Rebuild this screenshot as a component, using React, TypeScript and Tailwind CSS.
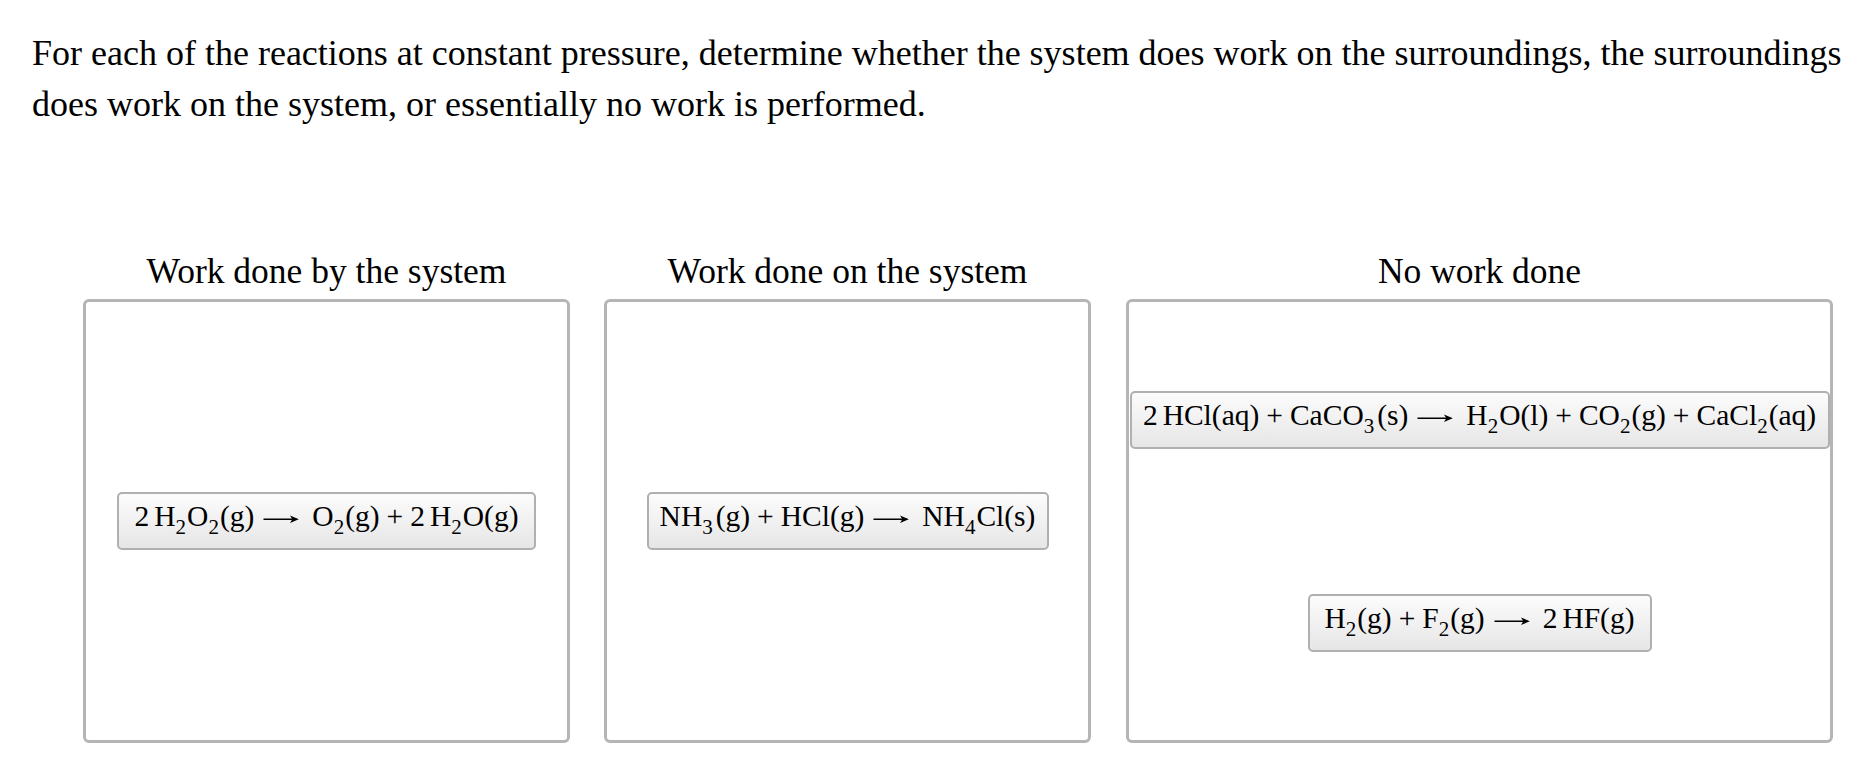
import React from "react";

function Sub({ children }: { children: React.ReactNode }) {
  return (
    <span className="relative top-[8px] mr-[1px] text-[21px]">{children}</span>
  );
}

function Thin() {
  return <span className="inline-block w-[5px]" />;
}

function Plus() {
  return <span className="mx-[7px]">+</span>;
}

function Arrow() {
  return (
    <svg
      className="ml-[9px] mr-[13px] inline-block align-baseline"
      width="36"
      height="12"
      viewBox="0 0 36 12"
    >
      <line x1="0.5" y1="5.25" x2="33.5" y2="5.25" stroke="#000" strokeWidth="1.5" />
      <path d="M35.8 5.25 L27 1.4 L29.3 5.25 L27 9.1 Z" fill="#000" />
    </svg>
  );
}

function Chip({
  width,
  children,
}: {
  width: string;
  children: React.ReactNode;
}) {
  return (
    <div
      className={`${width} flex h-[58px] shrink-0 items-center justify-center rounded-[5px] border-2 border-[#b0b0b0] bg-linear-to-b from-[#fcfcfc] to-[#e6e6e6] pb-[8px]`}
    >
      <span className="whitespace-nowrap text-[29.5px] leading-none text-black">
        {children}
      </span>
    </div>
  );
}

function Column({
  title,
  boxClass,
  children,
}: {
  title: string;
  boxClass: string;
  children: React.ReactNode;
}) {
  return (
    <div className="flex flex-col items-center">
      <h3 className="h-[40px] whitespace-nowrap text-[35.5px] leading-[40px] font-normal">
        {title}
      </h3>
      <div
        className={`${boxClass} mt-[8px] h-[444px] rounded-[6px] border-[3px] border-[#b5b5b5] bg-white`}
      >
        {children}
      </div>
    </div>
  );
}

export default function App() {
  return (
    <div className="min-h-[784px] w-full bg-white font-['Liberation_Serif','Times_New_Roman',serif] text-black">
      <p className="pl-[32px] pt-[28px] text-[36px] leading-[51px]">
        For each of the reactions at constant pressure, determine whether the
        system does work on the surroundings, the surroundings
        <br />
        does work on the system, or essentially no work is performed.
      </p>

      <div className="ml-[83px] mt-[121px] flex items-start gap-[34px]">
        <Column
          title="Work done by the system"
          boxClass="w-[487px] flex items-center justify-center"
        >
          <Chip width="w-[419px]">
            2<Thin />H<Sub>2</Sub>O<Sub>2</Sub>(g)
            <Arrow />O<Sub>2</Sub>(g)
            <Plus />2<Thin />H<Sub>2</Sub>O(g)
          </Chip>
        </Column>

        <Column
          title="Work done on the system"
          boxClass="w-[487px] flex items-center justify-center"
        >
          <Chip width="w-[402px]">
            NH<Sub>3</Sub>
            <span className="ml-[2px]">(g)</span>
            <Plus />HCl(g)
            <Arrow />NH<Sub>4</Sub>Cl(s)
          </Chip>
        </Column>

        <div className="ml-px">
          <Column
            title="No work done"
            boxClass="w-[707px] flex flex-col items-center justify-center gap-[145px]"
          >
            <Chip width="w-[700px]">
              2<Thin />HCl(aq)
              <Plus />CaCO<Sub>3</Sub>
              <span className="ml-[2px]">(s)</span>
              <Arrow />H<Sub>2</Sub>O(l)
              <Plus />CO<Sub>2</Sub>(g)
              <Plus />CaCl<Sub>2</Sub>(aq)
            </Chip>
            <Chip width="w-[344px]">
              H<Sub>2</Sub>(g)
              <Plus />F<Sub>2</Sub>(g)
              <Arrow />2<Thin />HF(g)
            </Chip>
          </Column>
        </div>
      </div>
    </div>
  );
}
